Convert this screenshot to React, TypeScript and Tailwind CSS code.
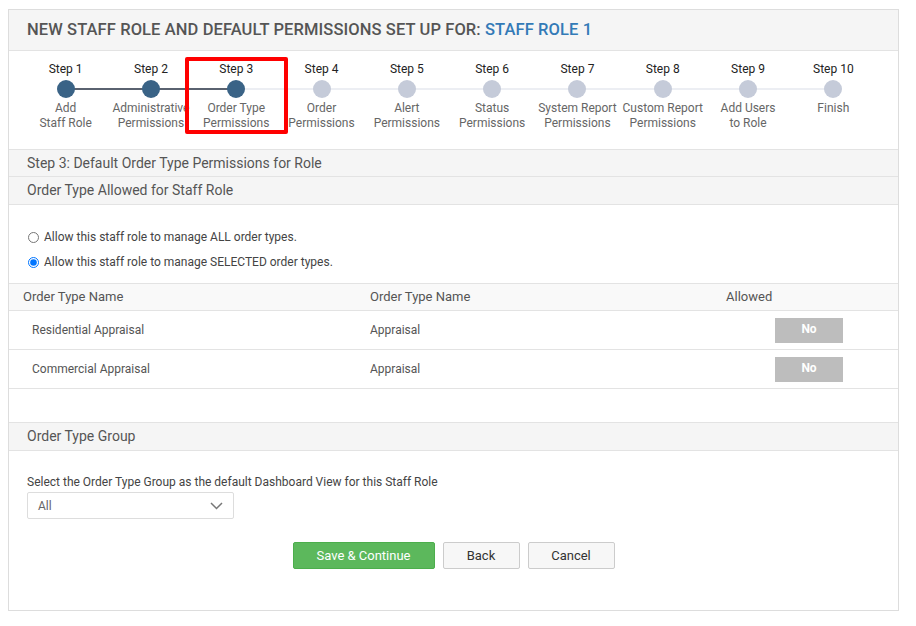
const steps = [
  ["Add", "Staff Role"],
  ["Administrative", "Permissions"],
  ["Order Type", "Permissions"],
  ["Order", "Permissions"],
  ["Alert", "Permissions"],
  ["Status", "Permissions"],
  ["System Report", "Permissions"],
  ["Custom Report", "Permissions"],
  ["Add Users", "to Role"],
  ["Finish", ""],
];

const rows = [
  ["Residential Appraisal", "Appraisal"],
  ["Commercial Appraisal", "Appraisal"],
];

export default function App() {
  return (
    <div className="min-h-[626px] bg-white pt-[9px] pl-2 text-[#555]" style={{ fontFamily: "Roboto, sans-serif" }}>
      <div className="flex h-[602px] w-[891px] flex-col border border-[#ddd]">
        <div className="flex h-[41px] items-center border-b border-[#e3e3e3] bg-[#f5f5f5] px-[18px] text-[16.5px] font-medium uppercase tracking-[0.1px] text-[#555]">
          New staff role and default permissions set up for:&nbsp;<span className="text-[#337ab7]">Staff Role 1</span>
        </div>
        <div className="flex h-[98px] pl-[14px] pt-[10px]">
          {steps.map(([a, b], i) => {
            const done = i <= 2;
            return (
              <div key={i} className="relative flex w-[85.3px] shrink-0 flex-col items-center text-[12px]">
                {i < 9 && (
                  <div className={`absolute left-[42px] top-[27px] h-[2px] w-[86px] ${i < 2 ? "bg-[#5a6270]" : "bg-[#eceef3]"}`} />
                )}
                <div className="leading-[16px] text-[#222]">Step {i + 1}</div>
                <div className={`relative mt-[3px] h-[18px] w-[18px] rounded-full ${done ? "bg-[#3a6386]" : "bg-[#c5cbd9]"}`} />
                <div className="mt-[3px] whitespace-nowrap text-center leading-[15px] text-[#666]">
                  {a}
                  <br />
                  {b}
                </div>
                {i === 2 && (
                  <div className="absolute left-[-9px] top-[-4px] h-[77px] w-[103px] rounded-[2px] border-[4px] border-[#f00]" />
                )}
              </div>
            );
          })}
        </div>
        <div className="flex h-[28px] items-center border-y border-[#e3e3e3] bg-[#f5f5f5] px-[18px] text-[14px]">Step 3: Default Order Type Permissions for Role</div>
        <div className="flex h-[28px] items-center border-b border-[#e3e3e3] bg-[#f5f5f5] px-[18px] text-[14px]">Order Type Allowed for Staff Role</div>
        <div className="flex flex-col gap-[7px] px-[19px] pt-[23px] pb-[12px] text-[12px] text-[#444]">
          <label className="flex items-center gap-[5px]"><input type="radio" name="r" className="h-[11px] w-[11px]" />Allow this staff role to manage ALL order types.</label>
          <label className="flex items-center gap-[5px]"><input type="radio" name="r" defaultChecked className="h-[11px] w-[11px]" />Allow this staff role to manage SELECTED order types.</label>
        </div>
        <div className="flex h-[28px] items-center border-y border-[#e3e3e3] bg-[#f9f9f9] pl-[14px] text-[13px]">
          <div className="w-[347px]">Order Type Name</div>
          <div className="w-[356px]">Order Type Name</div>
          <div>Allowed</div>
        </div>
        {rows.map(([a, b], i) => (
          <div key={i} className="flex h-[39px] items-center border-b border-[#e3e3e3] pl-[23px] text-[12px]">
            <div className="w-[338px]">{a}</div>
            <div className="w-[405px]">{b}</div>
            <div className="flex h-[25px] w-[68px] items-start justify-center bg-[#bdbdbd] pt-[2px] text-[12px] font-bold text-white">No</div>
          </div>
        ))}
        <div className="h-[33px]" />
        <div className="flex h-[29px] items-center border-y border-[#e3e3e3] bg-[#f5f5f5] px-[18px] text-[14px]">Order Type Group</div>
        <div className="px-[18px] pt-[22px] text-[12px] text-[#444]">
          <div>Select the Order Type Group as the default Dashboard View for this Staff Role</div>
          <div className="mt-[1px] flex h-[27px] w-[207px] items-center justify-between rounded-[2px] border border-[#ddd] px-[10px] text-[#666]">
            All
            <svg width="13" height="8" viewBox="0 0 13 8" fill="none" stroke="#777" strokeWidth="1.5"><path d="M1 1l5.5 5.5L12 1" /></svg>
          </div>
        </div>
        <div className="mt-[23px] flex justify-center gap-[8px] text-[13px]">
          <button className="h-[27px] w-[142px] rounded-[2px] border border-[#4cae4c] bg-[#5cb85c] text-white">Save &amp; Continue</button>
          <button className="h-[27px] w-[77px] rounded-[2px] border border-[#ccc] bg-[#f7f7f7] text-[#333]">Back</button>
          <button className="h-[27px] w-[87px] rounded-[2px] border border-[#ccc] bg-[#f7f7f7] text-[#333]">Cancel</button>
        </div>
      </div>
    </div>
  );
}
